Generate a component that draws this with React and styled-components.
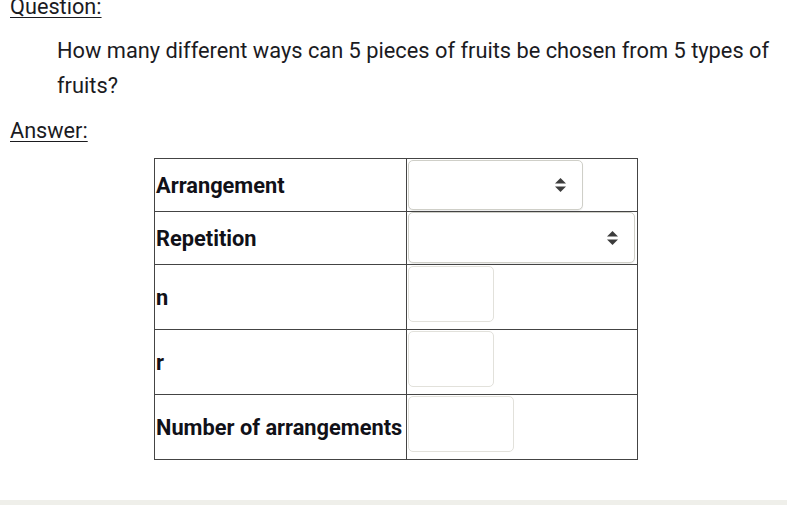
import styled, { createGlobalStyle } from "styled-components";

const GlobalStyle = createGlobalStyle`
  html, body {
    margin: 0;
    padding: 0;
    background: #ffffff;
  }
  body {
    font-family: Roboto, "Liberation Sans", sans-serif;
    color: #1b1b1f;
    overflow: hidden;
  }
`;

const Page = styled.div`
  padding: 0 0 0 10px;
  margin-top: -3px;
`;

const Heading = styled.div`
  font-size: 21.7px;
  line-height: 20px;
  text-decoration: underline;
  text-underline-offset: 3px;
  text-decoration-thickness: 1px;
  margin: ${(p) => p.$margin || "0"};
`;

const QuestionText = styled.p`
  font-size: 21.8px;
  line-height: 35px;
  margin: 16px 4px 0 47px;
`;

const AnswerTable = styled.table`
  border-collapse: collapse;
  margin-left: 144px;
  margin-top: 17px;
  border: 1px solid #444;
`;

const Row = styled.tr`
  height: ${(p) => p.$h}px;
`;

const LabelCell = styled.td`
  border: 1px solid #444;
  width: 249px;
  padding: 0 1px;
  font-size: 21.8px;
  font-weight: 700;
  color: #111118;
  vertical-align: middle;
  white-space: nowrap;
`;

const FieldCell = styled.td`
  border: 1px solid #444;
  width: 227px;
  padding: 0 2px 0 1px;
  vertical-align: top;
`;

const SelectWrap = styled.div`
  position: relative;
  width: ${(p) => p.$w}px;
  height: ${(p) => p.$h}px;
  margin-top: ${(p) => p.$top}px;
`;

const Select = styled.select`
  appearance: none;
  -webkit-appearance: none;
  display: block;
  width: 100%;
  height: 100%;
  box-sizing: border-box;
  border: 1px solid #cfcfc8;
  border-radius: 5px;
  background: #fff;
  font-family: inherit;
  font-size: 16px;
  box-shadow: 0 1px 1px rgba(0, 0, 0, 0.08);
`;

const Arrow = styled.svg`
  position: absolute;
  right: 17px;
  top: 50%;
  transform: translateY(-50%);
  pointer-events: none;
`;

const Input = styled.input`
  display: block;
  width: ${(p) => p.$w}px;
  height: 56px;
  box-sizing: border-box;
  border: 1px solid #e2e1db;
  border-radius: 5px;
  background: #fff;
  margin: 1px 0 0;
  font-family: inherit;
  font-size: 16px;
`;

const Footer = styled.div`
  height: 6px;
  background: #efefea;
  margin-top: 40px;
`;

const UpDown = () => (
  <Arrow width="11" height="14" viewBox="0 0 11 14">
    <path d="M5.5 0 L11 5.5 L0 5.5 Z" fill="#3c3c3c" />
    <path d="M0 8.5 L11 8.5 L5.5 14 Z" fill="#3c3c3c" />
  </Arrow>
);

const SelectField = ({ width, height, top }) => (
  <SelectWrap $w={width} $h={height} $top={top}>
    <Select defaultValue="">
      <option value=""></option>
    </Select>
    <UpDown />
  </SelectWrap>
);

export default function App() {
  return (
    <>
      <GlobalStyle />
      <Page>
        <Heading>Question:</Heading>
        <QuestionText>
          How many different ways can 5 pieces of fruits be chosen from 5 types of fruits?
        </QuestionText>
        <Heading $margin="18px 0 0">Answer:</Heading>
        <AnswerTable>
          <tbody>
            <Row $h={53}>
              <LabelCell>Arrangement</LabelCell>
              <FieldCell>
                <SelectField width={175} height={50} top={1} />
              </FieldCell>
            </Row>
            <Row $h={53}>
              <LabelCell>Repetition</LabelCell>
              <FieldCell>
                <SelectField width={227} height={51} top={0} />
              </FieldCell>
            </Row>
            <Row $h={65}>
              <LabelCell>n</LabelCell>
              <FieldCell>
                <Input $w={86} />
              </FieldCell>
            </Row>
            <Row $h={65}>
              <LabelCell>r</LabelCell>
              <FieldCell>
                <Input $w={86} />
              </FieldCell>
            </Row>
            <Row $h={65}>
              <LabelCell>Number of arrangements</LabelCell>
              <FieldCell>
                <Input $w={106} />
              </FieldCell>
            </Row>
          </tbody>
        </AnswerTable>
      </Page>
      <Footer />
    </>
  );
}
